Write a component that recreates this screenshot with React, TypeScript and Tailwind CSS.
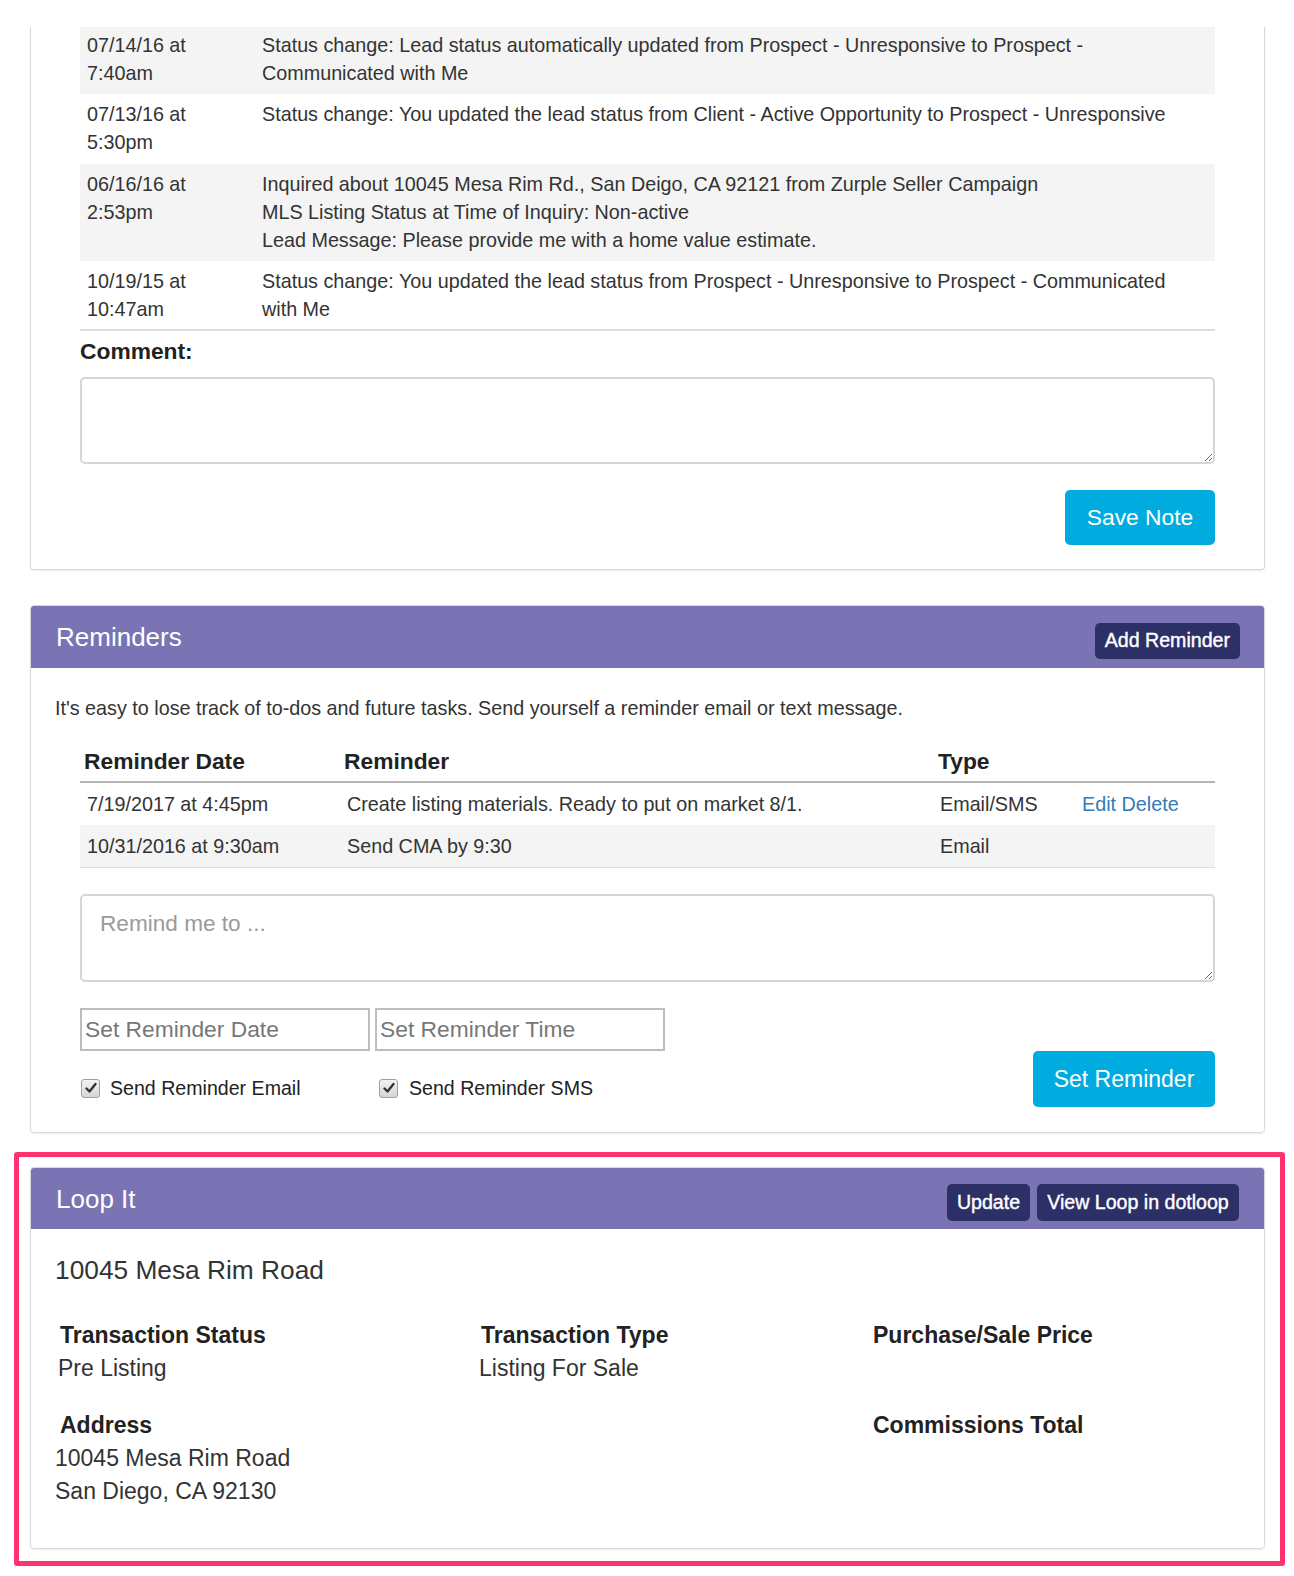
import React from "react";

const notes = [
  {
    date: ["07/14/16 at", "7:40am"],
    text: [
      "Status change: Lead status automatically updated from Prospect - Unresponsive to Prospect -",
      "Communicated with Me",
    ],
    gray: true,
    cls: "pt-[4px] pb-[7px]",
  },
  {
    date: ["07/13/16 at", "5:30pm"],
    text: [
      "Status change: You updated the lead status from Client - Active Opportunity to Prospect - Unresponsive",
    ],
    gray: false,
    cls: "pt-[6px] pb-[8px]",
  },
  {
    date: ["06/16/16 at", "2:53pm"],
    text: [
      "Inquired about 10045 Mesa Rim Rd., San Deigo, CA 92121 from Zurple Seller Campaign",
      "MLS Listing Status at Time of Inquiry: Non-active",
      "Lead Message: Please provide me with a home value estimate.",
    ],
    gray: true,
    cls: "pt-[6px] pb-[7px]",
  },
  {
    date: ["10/19/15 at", "10:47am"],
    text: [
      "Status change: You updated the lead status from Prospect - Unresponsive to Prospect - Communicated",
      "with Me",
    ],
    gray: false,
    cls: "pt-[6px] pb-[6px] border-b-2 border-[#dcdcdc]",
  },
];

function Check() {
  return (
    <span className="inline-flex h-[19px] w-[19px] items-center justify-center rounded-[3px] border border-[#a0a0a0] bg-gradient-to-b from-[#f2f2f2] to-[#d6d6d6]">
      <svg width="14" height="14" viewBox="0 0 14 14">
        <path d="M2.5 7.5 L5.5 10.5 L11.5 3" fill="none" stroke="#333" strokeWidth="2.4" strokeLinecap="round" strokeLinejoin="round" />
      </svg>
    </span>
  );
}

export default function App() {
  return (
    <div className="w-[1294px] h-[1576px] overflow-hidden bg-white text-[#333] [font-family:'Liberation_Sans',Arial,sans-serif]">
      <div className="h-[27px]" />
      {/* Notes card (top cut off) */}
      <div className="ml-[30px] w-[1235px] border-x border-b border-[#d9d9d9] rounded-b-[4px] shadow-[0_1px_2px_rgba(0,0,0,0.08)] px-[49px] pb-[24px]">
        <div className="text-[19.75px] leading-[28px]">
          {notes.map((n, i) => (
            <div key={i} className={`grid grid-cols-[175px_1fr] ${n.gray ? "bg-[#f4f4f4]" : "bg-white"} ${n.cls}`}>
              <div className="pl-[7px] whitespace-nowrap">
                {n.date.map((d, j) => (
                  <div key={j}>{d}</div>
                ))}
              </div>
              <div className="pl-[7px] whitespace-nowrap">
                {n.text.map((t, j) => (
                  <div key={j}>{t}</div>
                ))}
              </div>
            </div>
          ))}
        </div>
        <div className="mt-[6px] font-bold text-[22.8px] leading-[28px] text-[#222]">Comment:</div>
        <textarea className="mt-[12px] block w-full h-[87px] border-2 border-[#d6d6d6] rounded-[5px] outline-none" />
        <div className="flex justify-end mt-[26px]">
          <button className="h-[55px] w-[150px] bg-[#00acdf] text-white text-[22.8px] rounded-[5px]">Save Note</button>
        </div>
      </div>

      {/* Reminders card */}
      <div className="mt-[35px] ml-[30px] w-[1235px] border border-[#d9d9d9] rounded-[4px] shadow-[0_1px_2px_rgba(0,0,0,0.08)] overflow-hidden">
        <div className="h-[62px] bg-[#7a74b5] flex items-center justify-between pl-[25px] pr-[24px]">
          <div className="text-white text-[26px] leading-[32px]">Reminders</div>
          <button className="mt-[8px] h-[36px] px-[10px] rounded-[5px] bg-[#2d2f67] text-white text-[19.6px] leading-none [-webkit-text-stroke:0.4px_white]">
            Add Reminder
          </button>
        </div>
        <div className="pl-[24px] pr-[24px] pt-[26px] pb-[25px]">
          <div className="text-[19.75px] leading-[28px] whitespace-nowrap">
            It's easy to lose track of to-dos and future tasks. Send yourself a reminder email or text message.
          </div>
          <div className="mx-[25px]">
            <div className="mt-[20px] grid grid-cols-[260px_593px_142px_1fr] font-bold text-[22.8px] leading-[28px] text-[#222] pt-[5px] pb-[6px] border-b-2 border-[#b5b5b5]">
              <div className="pl-[4px]">Reminder Date</div>
              <div className="pl-[4px]">Reminder</div>
              <div className="pl-[5px]">Type</div>
              <div />
            </div>
            <div className="grid grid-cols-[260px_593px_142px_1fr] text-[19.75px] leading-[28px] py-[7px] whitespace-nowrap">
              <div className="pl-[7px]">7/19/2017 at 4:45pm</div>
              <div className="pl-[7px]">Create listing materials. Ready to put on market 8/1.</div>
              <div className="pl-[7px]">Email/SMS</div>
              <div className="pl-[7px] text-[#337ab7]">Edit Delete</div>
            </div>
            <div className="grid grid-cols-[260px_593px_142px_1fr] text-[19.75px] leading-[28px] py-[7px] bg-[#f4f4f4] border-b border-[#dcdcdc] whitespace-nowrap">
              <div className="pl-[7px]">10/31/2016 at 9:30am</div>
              <div className="pl-[7px]">Send CMA by 9:30</div>
              <div className="pl-[7px]">Email</div>
              <div />
            </div>
            <textarea
              placeholder="Remind me to ..."
              className="mt-[26px] block w-full h-[88px] border-2 border-[#d6d6d6] rounded-[5px] px-[18px] pt-[12px] text-[22.6px] leading-[32px] placeholder:text-[#9a9a9a] outline-none"
            />
            <div className="mt-[26px] flex justify-between items-start">
              <div>
                <div className="flex gap-[5px]">
                  <input
                    placeholder="Set Reminder Date"
                    className="h-[43px] w-[290px] border-2 border-[#bdbdbd] px-[3px] text-[22.8px] placeholder:text-[#777] outline-none"
                  />
                  <input
                    placeholder="Set Reminder Time"
                    className="h-[43px] w-[290px] border-2 border-[#bdbdbd] px-[3px] text-[22.8px] placeholder:text-[#777] outline-none"
                  />
                </div>
                <div className="mt-[23px] flex items-center text-[19.6px] leading-[28px] text-[#222]">
                  <div className="w-[299px] flex items-center pl-[1px]">
                    <Check />
                    <span className="ml-[10px]">Send Reminder Email</span>
                  </div>
                  <div className="flex items-center">
                    <Check />
                    <span className="ml-[11px]">Send Reminder SMS</span>
                  </div>
                </div>
              </div>
              <button className="mt-[43px] h-[56px] w-[182px] bg-[#00acdf] text-white text-[23px] rounded-[5px]">Set Reminder</button>
            </div>
          </div>
        </div>
      </div>

      {/* Loop It (highlighted) */}
      <div className="mt-[19px] ml-[14px] w-[1271px] border-[5px] border-[#ff3370] rounded-[3px] pt-[10px] pb-[12px]">
        <div className="ml-[11px] w-[1235px] border border-[#d9d9d9] rounded-[4px] shadow-[0_1px_2px_rgba(0,0,0,0.08)] overflow-hidden">
          <div className="h-[61px] bg-[#7a74b5] flex items-center justify-between pl-[25px] pr-[25px]">
            <div className="text-white text-[26px] leading-[32px]">Loop It</div>
            <div className="mt-[8px] flex gap-[7px]">
              <button className="h-[37px] w-[83px] rounded-[5px] bg-[#2d2f67] text-white text-[19.6px] leading-none [-webkit-text-stroke:0.4px_white]">
                Update
              </button>
              <button className="h-[37px] w-[202px] rounded-[5px] bg-[#2d2f67] text-white text-[19.6px] leading-none [-webkit-text-stroke:0.4px_white]">
                View Loop in dotloop
              </button>
            </div>
          </div>
          <div className="pl-[24px] pr-[24px] pt-[25px] pb-[40px]">
            <div className="text-[26.3px] leading-[32px]">10045 Mesa Rim Road</div>
            <div className="mt-[33px] grid grid-cols-[421px_392px_1fr] text-[23px] leading-[33px]">
              <div>
                <div className="pl-[5px] font-bold text-[#222]">Transaction Status</div>
                <div className="pl-[3px]">Pre Listing</div>
              </div>
              <div>
                <div className="pl-[5px] font-bold text-[#222]">Transaction Type</div>
                <div className="pl-[3px]">Listing For Sale</div>
              </div>
              <div>
                <div className="pl-[5px] font-bold text-[#222]">Purchase/Sale Price</div>
              </div>
            </div>
            <div className="mt-[24px] grid grid-cols-[421px_392px_1fr] text-[23px] leading-[33px]">
              <div>
                <div className="pl-[5px] font-bold text-[#222]">Address</div>
                <div>10045 Mesa Rim Road</div>
                <div>San Diego, CA 92130</div>
              </div>
              <div />
              <div>
                <div className="pl-[5px] font-bold text-[#222]">Commissions Total</div>
              </div>
            </div>
          </div>
        </div>
      </div>
    </div>
  );
}
